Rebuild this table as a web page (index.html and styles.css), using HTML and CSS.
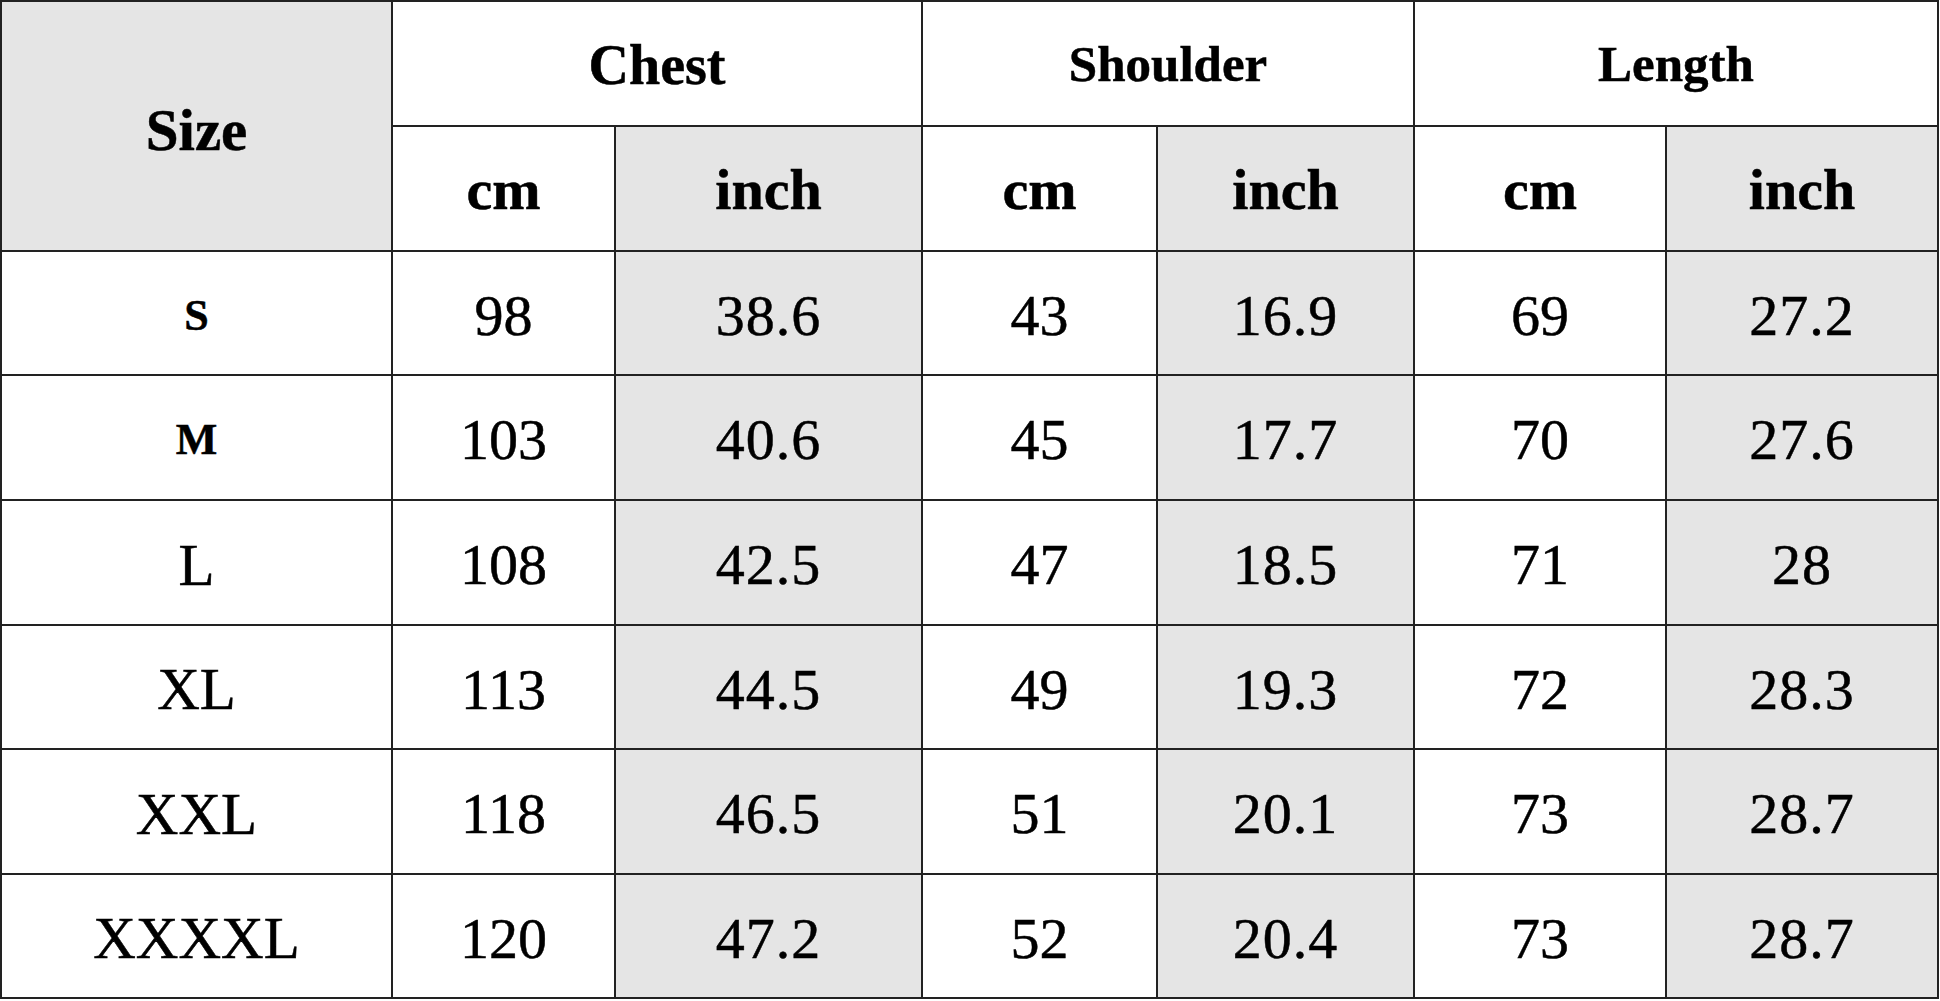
FILE: index.html
```html
<!DOCTYPE html>
<html>
<head>
<meta charset="utf-8">
<link rel="stylesheet" href="styles.css">
</head>
<body>
<div class="chart">
  <div class="cell gray size-head">Size</div>
  <div class="cell grp chest">Chest</div>
  <div class="cell grp narrow">Shoulder</div>
  <div class="cell grp narrow">Length</div>
  <div class="cell unit">cm</div>
  <div class="cell unit gray">inch</div>
  <div class="cell unit">cm</div>
  <div class="cell unit gray">inch</div>
  <div class="cell unit">cm</div>
  <div class="cell unit gray">inch</div>

  <div class="cell lbl small">S</div>
  <div class="cell num">98</div><div class="cell num gray">38.6</div>
  <div class="cell num">43</div><div class="cell num gray">16.9</div>
  <div class="cell num">69</div><div class="cell num gray">27.2</div>

  <div class="cell lbl small">M</div>
  <div class="cell num">103</div><div class="cell num gray">40.6</div>
  <div class="cell num">45</div><div class="cell num gray">17.7</div>
  <div class="cell num">70</div><div class="cell num gray">27.6</div>

  <div class="cell lbl">L</div>
  <div class="cell num">108</div><div class="cell num gray">42.5</div>
  <div class="cell num">47</div><div class="cell num gray">18.5</div>
  <div class="cell num">71</div><div class="cell num gray">28</div>

  <div class="cell lbl">XL</div>
  <div class="cell num">113</div><div class="cell num gray">44.5</div>
  <div class="cell num">49</div><div class="cell num gray">19.3</div>
  <div class="cell num">72</div><div class="cell num gray">28.3</div>

  <div class="cell lbl">XXL</div>
  <div class="cell num">118</div><div class="cell num gray">46.5</div>
  <div class="cell num">51</div><div class="cell num gray">20.1</div>
  <div class="cell num">73</div><div class="cell num gray">28.7</div>

  <div class="cell lbl">XXXXL</div>
  <div class="cell num">120</div><div class="cell num gray">47.2</div>
  <div class="cell num">52</div><div class="cell num gray">20.4</div>
  <div class="cell num">73</div><div class="cell num gray">28.7</div>
</div>
</body>
</html>
```

FILE: styles.css
```css
html, body {
  margin: 0;
  padding: 0;
  background: #ffffff;
}

.chart {
  display: grid;
  width: fit-content;
  grid-template-columns: 389px 221px 305px 233px 255px 250px 270px;
  grid-template-rows: 123px 123px 122px 123px 123px 122px 123px 122px;
  gap: 2px;
  padding: 2px;
  background: #222222;
  font-family: "Liberation Serif", "Times New Roman", serif;
  color: #000;
}

.cell {
  background: #ffffff;
  display: flex;
  align-items: center;
  justify-content: center;
  font-size: 58px;
  line-height: 1;
  box-sizing: border-box;
  -webkit-text-stroke: 0.5px #000;
}

.gray {
  background: #e5e5e5;
}

.size-head {
  grid-row: span 2;
  font-weight: bold;
  font-size: 59px;
  padding-top: 8px;
}

.grp {
  grid-column: span 2;
  font-weight: bold;
  padding-top: 2px;
}

.chest {
  font-size: 56px;
}

.narrow {
  font-size: 51px;
}

.unit {
  font-weight: bold;
  font-size: 58px;
  padding-top: 2px;
}

.lbl {
  font-size: 59px;
  padding-top: 5px;
}

.lbl.small {
  font-weight: bold;
  font-size: 44px;
}

.num {
  font-size: 58px;
  padding-top: 5px;
}

.num.gray {
  letter-spacing: 1px;
}
```
